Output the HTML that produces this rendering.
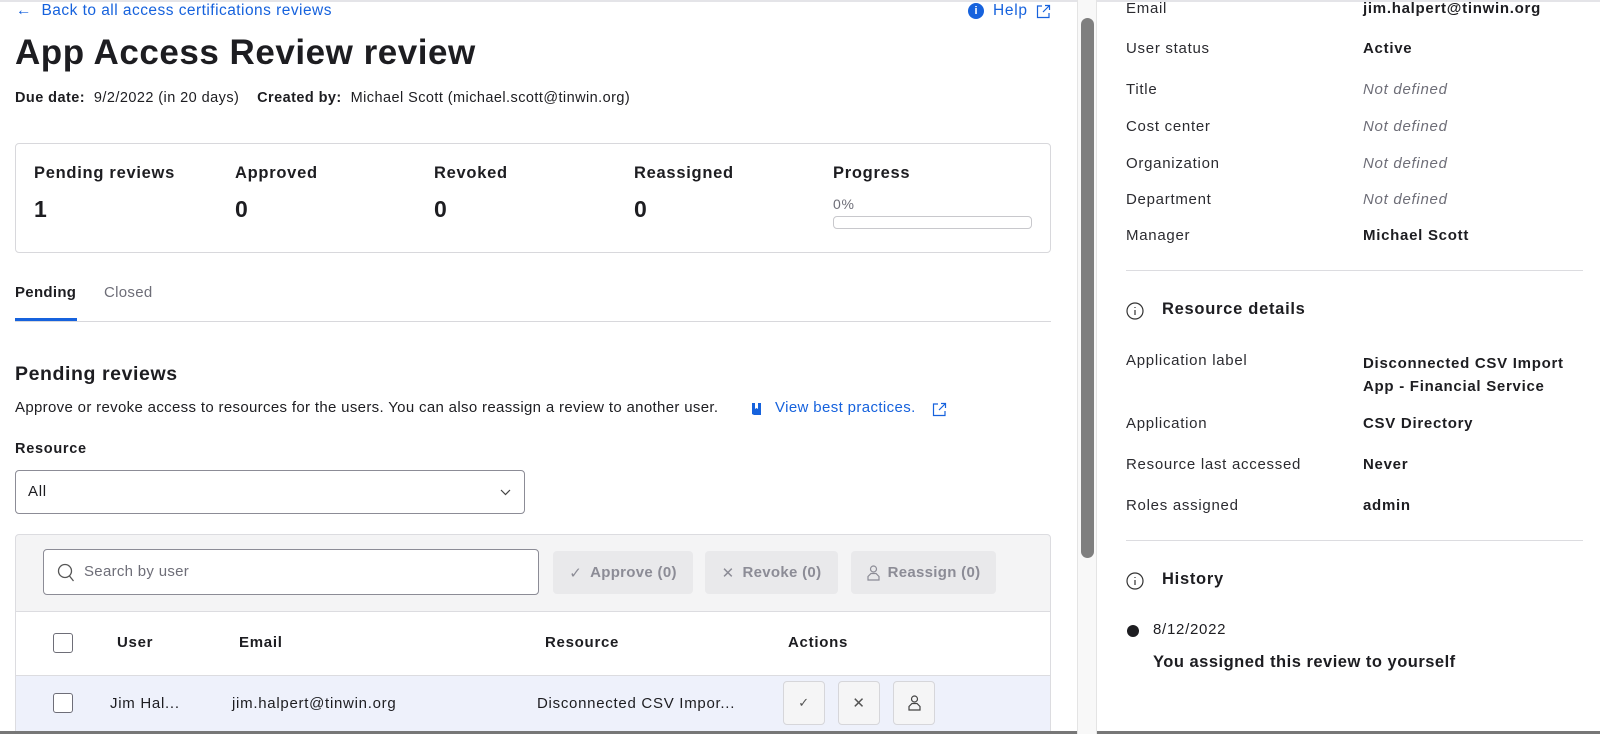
<!DOCTYPE html>
<html><head><meta charset="utf-8"><style>
*{box-sizing:border-box;margin:0;padding:0}
body{width:1600px;height:734px;overflow:hidden;background:#fff;font-family:"Liberation Sans",sans-serif;color:#1d1d21;position:relative;letter-spacing:0.045em}
.a{position:absolute;white-space:nowrap}
.blue{color:#1662dd}
.lbl{font-size:15px;color:#2b2b30}
.val{font-size:15px;font-weight:bold}
.nd{font-size:15px;font-style:italic;color:#6e6e78}
.btn{position:absolute;background:#e9e9eb;border-radius:4px;color:#8c8c96;font-size:15px;font-weight:bold;display:flex;align-items:center;justify-content:center;gap:8px;letter-spacing:0.02em}
.ab{position:absolute;width:42px;height:44px;border:1px solid #d6d6da;border-radius:4px;background:#f5f5f6;display:flex;align-items:center;justify-content:center}
.cb{position:absolute;width:20px;height:20px;border:1.5px solid #6e6e78;border-radius:3px;background:#fff}
</style></head><body>
<div class="a" style="left:0;top:0;width:1600px;height:2px;background:#e4e4e8"></div>

<div class="a blue" style="left:16px;top:2px;font-size:15.5px;letter-spacing:0.03em">&larr;&nbsp; Back to all access certifications reviews</div>
<div class="a" style="left:968px;top:3px;width:16px;height:16px;border-radius:50%;background:#1662dd;color:#fff;font-size:11px;font-weight:bold;text-align:center;line-height:16px;letter-spacing:0">i</div>
<div class="a blue" style="left:993px;top:2px;font-size:15.5px">Help</div>
<svg class="a" style="left:1036px;top:4px" width="15" height="15" viewBox="0 0 15 15" fill="none" stroke="#1662dd" stroke-width="1.2"><path d="M6 2H1.5v11.5H13V9M9 1.5h4.5V6M13.5 1.5L7 8"/></svg>

<div class="a" style="left:15px;top:33px;font-size:35px;font-weight:bold;letter-spacing:0.015em">App Access Review review</div>
<div class="a" style="left:15px;top:90px;font-size:14.5px;letter-spacing:0.03em"><b>Due date:</b>&nbsp; 9/2/2022 (in 20 days) &nbsp;&nbsp; <b>Created by:</b>&nbsp; Michael Scott (michael.scott@tinwin.org)</div>

<div class="a" style="left:15px;top:143px;width:1036px;height:110px;border:1px solid #d8d8dc;border-radius:4px"></div>
<div class="a" style="left:34px;top:164px;font-size:16.5px;font-weight:bold">Pending reviews</div>
<div class="a" style="left:235px;top:164px;font-size:16.5px;font-weight:bold">Approved</div>
<div class="a" style="left:434px;top:164px;font-size:16.5px;font-weight:bold">Revoked</div>
<div class="a" style="left:634px;top:164px;font-size:16.5px;font-weight:bold">Reassigned</div>
<div class="a" style="left:833px;top:164px;font-size:16.5px;font-weight:bold">Progress</div>
<div class="a" style="left:34px;top:196px;font-size:23px;font-weight:bold">1</div>
<div class="a" style="left:235px;top:196px;font-size:23px;font-weight:bold">0</div>
<div class="a" style="left:434px;top:196px;font-size:23px;font-weight:bold">0</div>
<div class="a" style="left:634px;top:196px;font-size:23px;font-weight:bold">0</div>
<div class="a" style="left:833px;top:196px;font-size:14px;color:#6e6e78">0%</div>
<div class="a" style="left:833px;top:216px;width:199px;height:13px;border:1px solid #c8c8cc;border-radius:4px"></div>

<div class="a" style="left:15px;top:284px;font-size:15px;font-weight:bold;letter-spacing:0.02em">Pending</div>
<div class="a" style="left:104px;top:284px;font-size:15px;color:#6e6e78;letter-spacing:0.02em">Closed</div>
<div class="a" style="left:15px;top:321px;width:1036px;height:1px;background:#d8d8dc"></div>
<div class="a" style="left:15px;top:318px;width:62px;height:3px;background:#1662dd"></div>

<div class="a" style="left:15px;top:363px;font-size:19.5px;font-weight:bold;letter-spacing:0.03em">Pending reviews</div>
<div class="a" style="left:15px;top:399px;font-size:15px;letter-spacing:0.022em">Approve or revoke access to resources for the users. You can also reassign a review to another user.</div>
<svg class="a" style="left:751px;top:402px" width="12" height="14" viewBox="0 0 12 14"><path d="M1 1h9v12H3l-2-1z" fill="#1662dd"/><path d="M4 1v6l1.5-1L7 7V1" fill="#fff"/></svg>
<div class="a blue" style="left:775px;top:399px;font-size:15px;letter-spacing:0.025em">View best practices.</div>
<svg class="a" style="left:932px;top:402px" width="15" height="15" viewBox="0 0 15 15" fill="none" stroke="#1662dd" stroke-width="1.2"><path d="M6 2H1.5v11.5H13V9M9 1.5h4.5V6M13.5 1.5L7 8"/></svg>

<div class="a" style="left:15px;top:441px;font-size:14.5px;font-weight:bold">Resource</div>
<div class="a" style="left:15px;top:470px;width:510px;height:44px;border:1px solid #8c8c96;border-radius:4px"></div>
<div class="a" style="left:28px;top:483px;font-size:15px">All</div>
<svg class="a" style="left:500px;top:489px" width="11" height="7" viewBox="0 0 11 7" fill="none" stroke="#444" stroke-width="1.2"><path d="M1 1l4.5 4.5L10 1"/></svg>

<div class="a" style="left:15px;top:534px;width:1036px;height:200px;border:1px solid #dcdce0;border-radius:4px 4px 0 0;background:#f4f4f5"></div>
<div class="a" style="left:43px;top:549px;width:496px;height:46px;border:1px solid #8c8c96;border-radius:4px;background:#fff"></div>
<svg class="a" style="left:57px;top:563px" width="18" height="20" viewBox="0 0 18 20" fill="none" stroke="#555" stroke-width="1.3"><circle cx="8" cy="8" r="6.5"/><path d="M12.5 13l4 5"/></svg>
<div class="a" style="left:84px;top:563px;font-size:15px;color:#6e6e78;letter-spacing:0.02em">Search by user</div>
<div class="btn" style="left:553px;top:551px;width:140px;height:43px"><span style="font-weight:normal">&#10003;</span>Approve (0)</div>
<div class="btn" style="left:705px;top:551px;width:133px;height:43px"><span style="font-weight:normal">&#10005;</span>Revoke (0)</div>
<div class="btn" style="left:851px;top:551px;width:145px;height:43px"><svg width="13" height="16" viewBox="0 0 13 16" fill="none" stroke="#8c8c96" stroke-width="1.2"><circle cx="6.5" cy="4" r="3"/><path d="M1 15v-3.5l3-3h5l3 3V15z"/></svg>Reassign (0)</div>

<div class="a" style="left:16px;top:611px;width:1034px;height:64px;background:#fff;border-top:1px solid #dcdce0"></div>
<div class="cb" style="left:53px;top:633px"></div>
<div class="a" style="left:117px;top:634px;font-size:15px;font-weight:bold">User</div>
<div class="a" style="left:239px;top:634px;font-size:15px;font-weight:bold">Email</div>
<div class="a" style="left:545px;top:634px;font-size:15px;font-weight:bold">Resource</div>
<div class="a" style="left:788px;top:634px;font-size:15px;font-weight:bold">Actions</div>

<div class="a" style="left:16px;top:675px;width:1034px;height:59px;background:#eef1fb;border-top:1px solid #dcdce0"></div>
<div class="cb" style="left:53px;top:693px"></div>
<div class="a" style="left:110px;top:695px;font-size:15px">Jim Hal...</div>
<div class="a" style="left:232px;top:695px;font-size:15px">jim.halpert@tinwin.org</div>
<div class="a" style="left:537px;top:695px;font-size:15px">Disconnected CSV Impor...</div>
<div class="ab" style="left:783px;top:681px;font-size:13px;color:#555">&#10003;</div>
<div class="ab" style="left:838px;top:681px;font-size:15px;color:#555">&#10005;</div>
<div class="ab" style="left:893px;top:681px"><svg width="13" height="16" viewBox="0 0 13 16" fill="none" stroke="#444" stroke-width="1.2"><circle cx="6.5" cy="4" r="3"/><path d="M1 15v-3.5l3-3h5l3 3V15z"/></svg></div>
<div class="a" style="left:0;top:731px;width:1600px;height:3px;background:#777"></div>

<div class="a" style="left:1077px;top:0;width:20px;height:734px;background:#f8f8f8;border-left:1px solid #e4e4e4;border-right:1px solid #e4e4e4"></div>
<div class="a" style="left:1081px;top:18px;width:13px;height:540px;border-radius:7px;background:#7f7f7f"></div>

<div class="a lbl" style="left:1126px;top:0px">Email</div><div class="a val" style="left:1363px;top:0px">jim.halpert@tinwin.org</div>
<div class="a lbl" style="left:1126px;top:40px">User status</div><div class="a val" style="left:1363px;top:40px">Active</div>
<div class="a lbl" style="left:1126px;top:81px">Title</div><div class="a nd" style="left:1363px;top:81px">Not defined</div>
<div class="a lbl" style="left:1126px;top:118px">Cost center</div><div class="a nd" style="left:1363px;top:118px">Not defined</div>
<div class="a lbl" style="left:1126px;top:155px">Organization</div><div class="a nd" style="left:1363px;top:155px">Not defined</div>
<div class="a lbl" style="left:1126px;top:191px">Department</div><div class="a nd" style="left:1363px;top:191px">Not defined</div>
<div class="a lbl" style="left:1126px;top:227px">Manager</div><div class="a val" style="left:1363px;top:227px">Michael Scott</div>
<div class="a" style="left:1126px;top:270px;width:457px;height:1px;background:#dcdce0"></div>

<svg class="a" style="left:1126px;top:302px" width="18" height="18" viewBox="0 0 18 18" fill="none" stroke="#333" stroke-width="1.2"><circle cx="9" cy="9" r="8"/><path d="M9 8v5M9 5v1"/></svg>
<div class="a" style="left:1162px;top:300px;font-size:16.5px;font-weight:bold">Resource details</div>
<div class="a lbl" style="left:1126px;top:352px">Application label</div>
<div class="a val" style="left:1363px;top:352px;line-height:23px">Disconnected CSV Import<br>App - Financial Service</div>
<div class="a lbl" style="left:1126px;top:415px">Application</div><div class="a val" style="left:1363px;top:415px">CSV Directory</div>
<div class="a lbl" style="left:1126px;top:456px">Resource last accessed</div><div class="a val" style="left:1363px;top:456px">Never</div>
<div class="a lbl" style="left:1126px;top:497px">Roles assigned</div><div class="a val" style="left:1363px;top:497px">admin</div>
<div class="a" style="left:1126px;top:540px;width:457px;height:1px;background:#dcdce0"></div>

<svg class="a" style="left:1126px;top:572px" width="18" height="18" viewBox="0 0 18 18" fill="none" stroke="#333" stroke-width="1.2"><circle cx="9" cy="9" r="8"/><path d="M9 8v5M9 5v1"/></svg>
<div class="a" style="left:1162px;top:570px;font-size:16.5px;font-weight:bold">History</div>
<div class="a" style="left:1127px;top:625px;width:12px;height:12px;border-radius:50%;background:#1d1d21"></div>
<div class="a" style="left:1153px;top:621px;font-size:15px">8/12/2022</div>
<div class="a" style="left:1153px;top:653px;font-size:16.5px;font-weight:bold;letter-spacing:0.03em">You assigned this review to yourself</div>
</body></html>
